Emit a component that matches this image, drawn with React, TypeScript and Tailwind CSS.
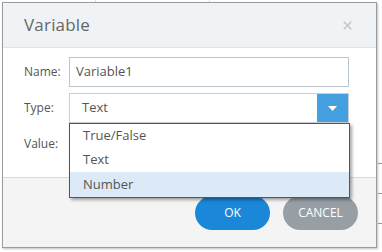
import { X } from 'lucide-react';

export default function App() {
  return (
    <div className="relative w-[382px] h-[252px] bg-white overflow-hidden" style={{ fontFamily: '"Open Sans", "Liberation Sans", sans-serif' }}>
      {/* faint page behind the dialog */}
      <div className="absolute left-[95px] top-0 h-[4px] w-px bg-[#e0e0e0]" />
      <div className="absolute left-[209px] top-0 h-[4px] w-px bg-[#e0e0e0]" />
      <div className="absolute left-[378px] top-[163px] h-px w-[4px] bg-[#6aa6d8]" />
      <div className="absolute left-[378px] top-[193px] h-px w-[4px] bg-[#6aa6d8]" />
      <div className="absolute left-[378px] top-[223px] h-px w-[4px] bg-[#6aa6d8]" />

      {/* dialog */}
      <div className="absolute left-[2px] top-[2px] w-[375px] h-[246px] border border-[#9c9c9c] shadow-[1px_1px_2px_rgba(0,0,0,0.25)] flex flex-col">
        <div className="h-[45px] bg-[#eff3f6] border-b border-[#dfe3e6] flex items-center justify-between pl-[21px] pr-[22px]">
          <span className="text-[17px] text-[#666] tracking-[0.2px]">Variable</span>
          <X className="w-[13px] h-[13px] text-[#c8c8c8]" strokeWidth={3.2} />
        </div>

        <div className="relative h-[129px] bg-white pl-[21px] pt-[9px]">
          <div className="flex items-center h-[30px]">
            <span className="w-[45px] text-[12px] text-[#555]">Name:</span>
            <div className="w-[280px] h-[30px] border border-[#b9c4cc] flex items-center pl-[6px] text-[13px] text-[#555]">Variable1</div>
          </div>
          <div className="flex items-center h-[30px] mt-[6px]">
            <span className="w-[45px] text-[12px] text-[#555]">Type:</span>
            <div className="w-[280px] h-[30px] border border-[#c8ced3] flex">
              <div className="flex-1 flex items-center pl-[12px] text-[13px] text-[#555]">Text</div>
              <div className="w-[31px] bg-[#44a0e0] flex items-center justify-center">
                <svg width="9" height="5" viewBox="0 0 9 5"><path d="M0 0h9L4.5 5z" fill="#fff" /></svg>
              </div>
            </div>
          </div>
          <div className="flex items-center h-[30px] mt-[6px]">
            <span className="w-[45px] text-[12px] text-[#555]">Value:</span>
          </div>

          {/* dropdown menu */}
          <div className="absolute left-[66px] top-[75px] w-[281px] bg-white border border-[#555] shadow-[2px_2px_3px_rgba(0,0,0,0.35)] z-10 flex flex-col">
            <div className="h-[24px] flex items-center pl-[13px] text-[13px] text-[#555]">True/False</div>
            <div className="h-[24px] flex items-center pl-[13px] text-[13px] text-[#555]">Text</div>
            <div className="h-[25px] flex items-center pl-[13px] text-[13px] text-[#555] bg-[#dceaf7]">Number</div>
          </div>
        </div>

        <div className="flex-1 bg-[#f4f4f4] border-t border-[#dcdcdc] flex justify-end items-start pt-[18px] pr-[18px] gap-[13px]">
          <button className="w-[75px] h-[34px] rounded-full bg-[#1a87d8] text-white text-[12px]">OK</button>
          <button className="w-[75px] h-[34px] rounded-full bg-[#969fa6] text-white text-[12px]">CANCEL</button>
        </div>
      </div>
    </div>
  );
}
